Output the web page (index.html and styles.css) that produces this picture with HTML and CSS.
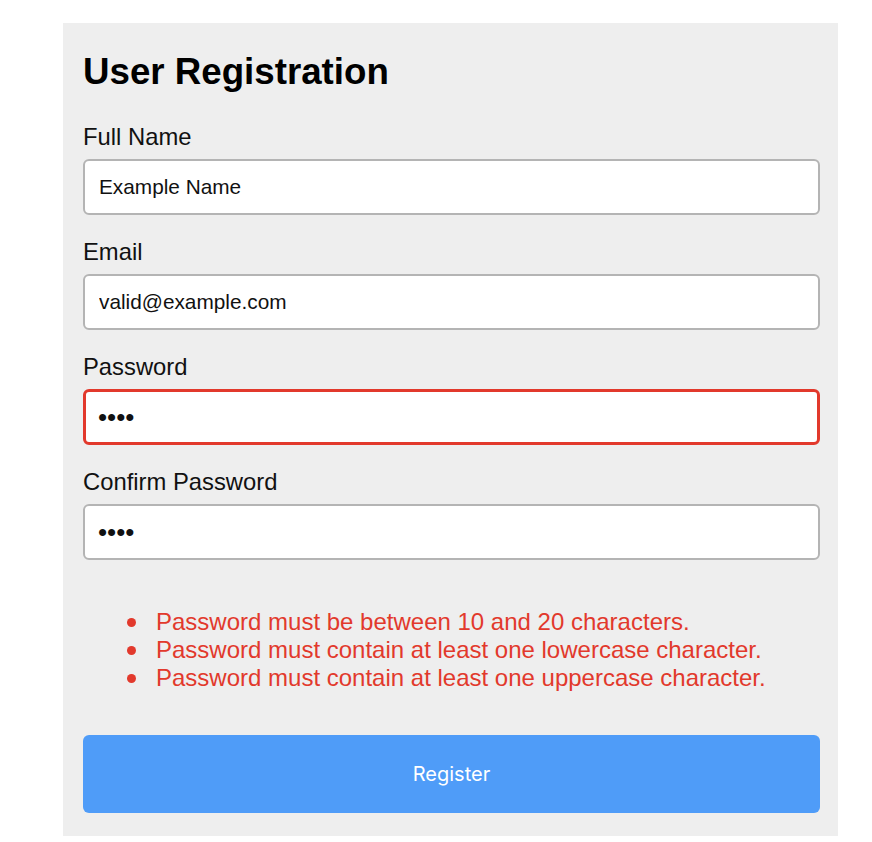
FILE: index.html
```html
<!DOCTYPE html>
<html>
<head>
  <title>User Registration</title>
  <meta name="viewport" content="width=device-width, initial-scale=1.0">
  <link rel="stylesheet" href="styles.css">
</head>
<body>
  <div class="container">
    <h1>User Registration</h1>
    <form id="regForm">
      <div class="input-group">
        <label for="fullName">Full Name</label>
        <input id="fullName" type="text" value="Example Name">
      </div>
      <div class="input-group">
        <label for="email">Email</label>
        <input id="email" type="email" value="valid@example.com">
      </div>
      <div class="input-group">
        <label for="password">Password</label>
        <input id="password" class="invalid" type="password" value="abcd">
      </div>
      <div class="input-group">
        <label for="confirm">Confirm Password</label>
        <input id="confirm" type="password" value="abcd">
      </div>

      <ul class="errors">
        <li>Password must be between 10 and 20 characters.</li>
        <li>Password must contain at least one lowercase character.</li>
        <li>Password must contain at least one uppercase character.</li>
      </ul>

      <button type="submit" class="btn">Register</button>
    </form>
  </div>
</body>
</html>
```

FILE: styles.css
```css
body {
  background-color: #fff;
  font-family: "Liberation Sans", Arial, sans-serif;
  margin: 0;
  padding: 0;
}

.container {
  width: 737px;
  margin: 23px 0 6px 63px;
  padding: 21px 18px 23px 20px;
  background-color: #eee;
}

h1 {
  margin: 7px 0 0;
  font-size: 36.7px;
  line-height: 41px;
  font-weight: bold;
  color: #000;
}

.input-group {
  margin-top: 23px;
}

.input-group:first-child {
  margin-top: 31px;
}

.input-group label {
  display: block;
  margin-bottom: 9px;
  font-size: 23.8px;
  line-height: 27px;
  color: #111;
}

.input-group input {
  display: block;
  box-sizing: border-box;
  width: 100%;
  height: 56px;
  margin: 0;
  padding: 0 14px;
  border: 2px solid #b4b4b4;
  border-radius: 6px;
  background-color: #fff;
  font-family: "Liberation Sans", Arial, sans-serif;
  font-size: 20.8px;
  color: #111;
  outline: none;
}

.input-group input[type="password"] {
  font-size: 26px;
  padding-left: 13px;
}

.input-group input.invalid {
  border: 3px solid #e2392c;
  padding-left: 12px;
}

.errors {
  margin: 48px 0 0;
  padding-left: 73px;
  list-style: none;
  font-size: 24px;
  line-height: 28px;
  color: #e2392c;
}

.errors li {
  position: relative;
}

.errors li::before {
  content: "";
  position: absolute;
  left: -29px;
  top: 10px;
  width: 9px;
  height: 9px;
  border-radius: 50%;
  background-color: #e2392c;
}

.btn {
  display: block;
  width: 100%;
  height: 78px;
  margin-top: 43px;
  border: none;
  border-radius: 6px;
  background-color: #4f9cf8;
  color: #fff;
  font-family: Inter, "Liberation Sans", sans-serif;
  font-size: 20px;
  cursor: pointer;
}
```
